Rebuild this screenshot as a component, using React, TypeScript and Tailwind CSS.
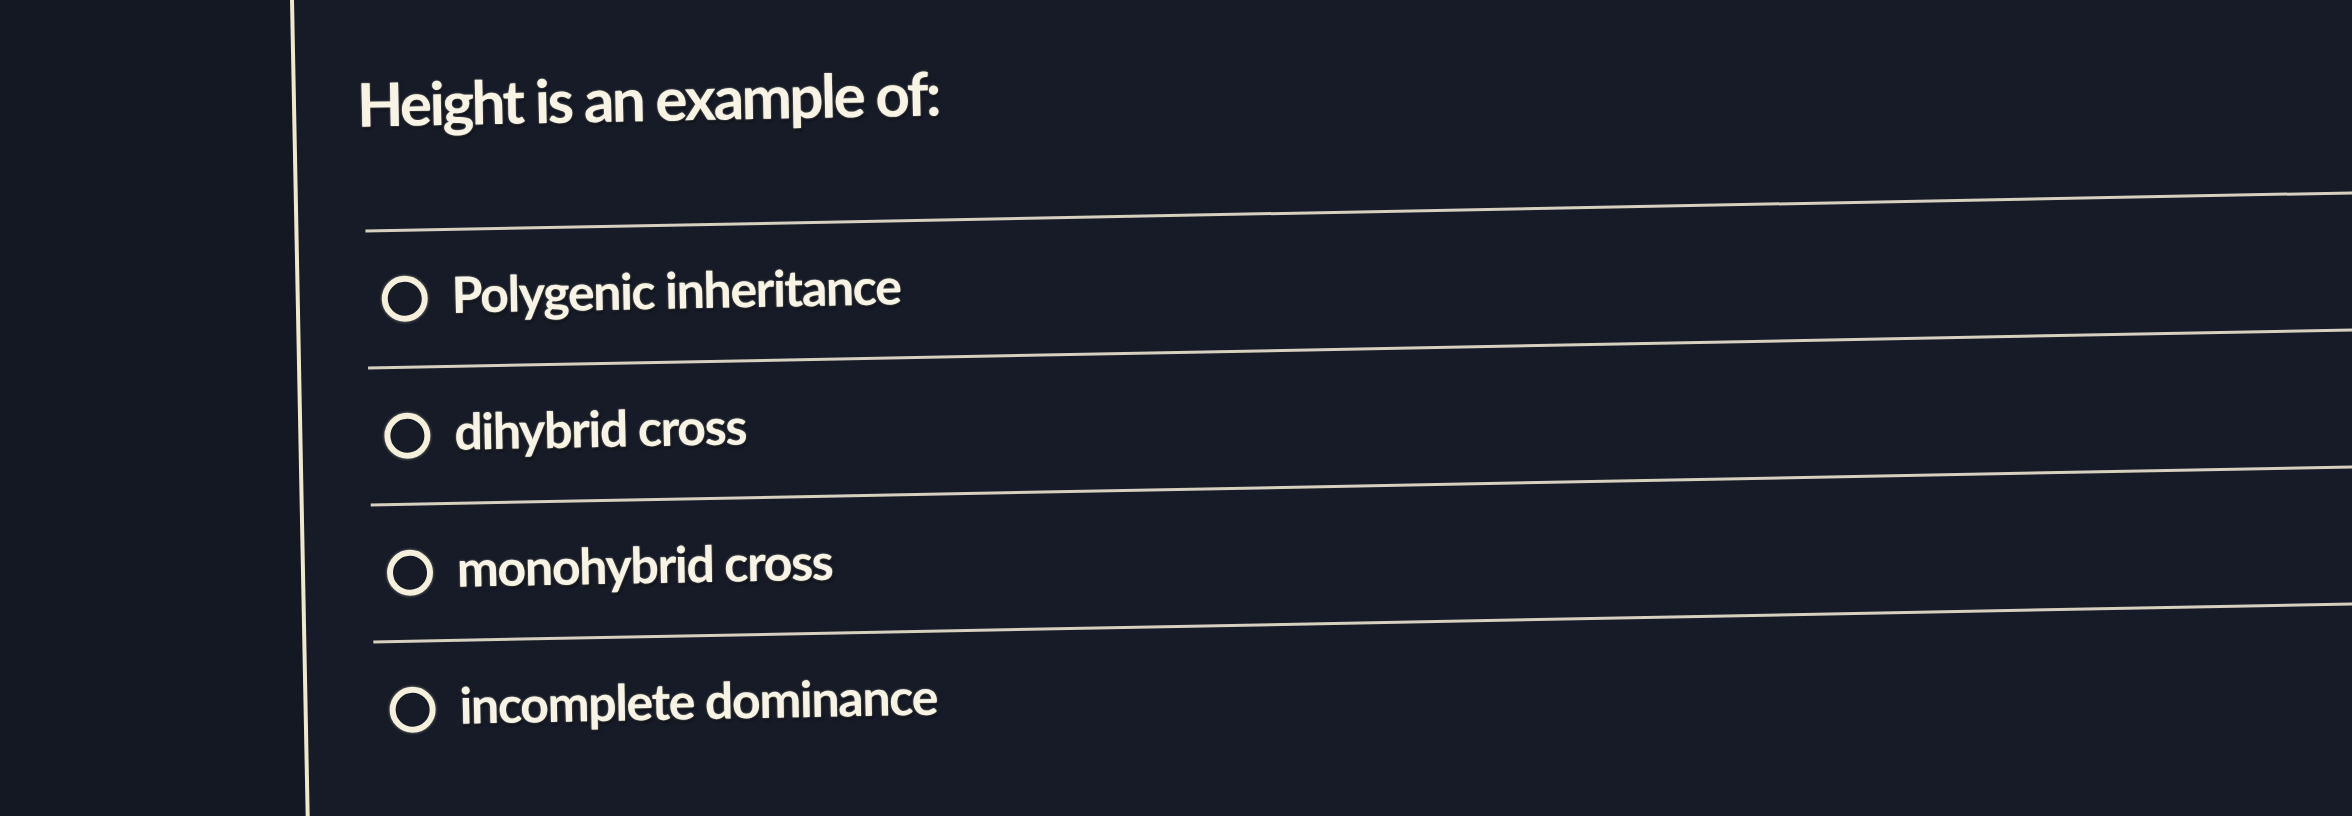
import React from "react";

const options = [
  "Polygenic inheritance",
  "dihybrid cross",
  "monohybrid cross",
  "incomplete dominance",
];

export default function App() {
  return (
    <div className="w-[2352px] h-[816px] overflow-hidden bg-[#161a26]">
      <div
        className="w-[2472px] h-[936px] -ml-[60px] -mt-[60px] rotate-[-1.1deg] flex"
        style={{ fontFamily: "Lato, 'Open Sans', sans-serif" }}
      >
        <div className="w-[358px] shrink-0 bg-[#141823]" />
        <div className="flex-1 border-l-[4px] border-[#efe9cc] bg-[#171b27] pl-[61px] pt-[112px]">
          <h1 className="text-[60px] leading-[1.2] font-bold tracking-[-2.4px] text-[#f7f4e6] [text-shadow:0_0_2px_rgba(255,250,225,0.6),1px_2px_3px_rgba(0,0,0,0.6)]">
            Height is an example of:
          </h1>
          <div className="ml-[6px] mt-[90px]">
            {options.map((o) => (
              <div
                key={o}
                className="h-[137px] border-t-[3px] border-[#d6d1bf] flex items-center pl-[15px] gap-[24px]"
              >
                <span className="w-[46px] h-[46px] rounded-full border-[6px] border-[#f4f0dc] shrink-0 shadow-[0_0_3px_rgba(255,250,225,0.5)]" />
                <span className="text-[50px] leading-[1.2] font-bold tracking-[-1.3px] text-[#f7f4e6] -mt-[8px] [text-shadow:0_0_2px_rgba(255,250,225,0.6),1px_2px_3px_rgba(0,0,0,0.6)]">
                  {o}
                </span>
              </div>
            ))}
          </div>
        </div>
      </div>
    </div>
  );
}
